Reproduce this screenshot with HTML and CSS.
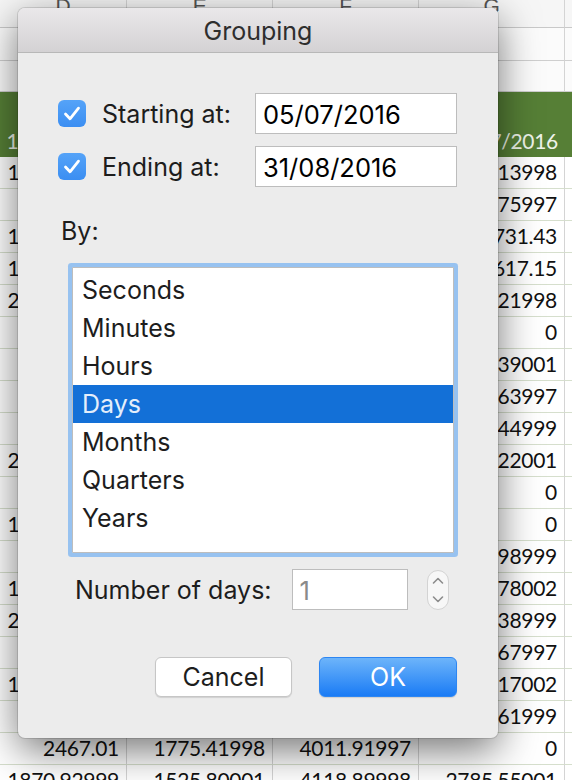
FILE: index.html
```html
<!DOCTYPE html>
<html lang="en">
<head>
    <meta charset="UTF-8">
    <title>Grouping</title>
    <link rel="stylesheet" href="styles.css">
</head>
<body>
    <div class="sheet">
        <div class="row col-heads">
            <div class="cell">D</div><div class="cell">E</div><div class="cell">F</div><div class="cell">G</div><div class="cell"></div>
        </div>
        <div class="row blank tall"><div class="cell"></div><div class="cell"></div><div class="cell"></div><div class="cell"></div><div class="cell"></div></div>
        <div class="row blank"><div class="cell"></div><div class="cell"></div><div class="cell"></div><div class="cell"></div><div class="cell"></div></div>
        <div class="row green"><div class="cell"></div><div class="cell"></div><div class="cell"></div><div class="cell"></div><div class="cell"></div></div>
        <div class="row green">
            <div class="cell">10/07/2016</div><div class="cell">17/07/2016</div><div class="cell">24/07/2016</div><div class="cell">31/07/2016</div><div class="cell"></div>
        </div>
        <div class="row"><div class="cell">1938.47001</div><div class="cell">1620.5</div><div class="cell">3987.22</div><div class="cell">2457.13998</div><div class="cell"></div></div>
        <div class="row"><div class="cell">2287.5</div><div class="cell">1412.88</div><div class="cell">3905.1</div><div class="cell">2145.75997</div><div class="cell"></div></div>
        <div class="row"><div class="cell">1702.32999</div><div class="cell">1588.2</div><div class="cell">4120.4</div><div class="cell">2731.43</div><div class="cell"></div></div>
        <div class="row"><div class="cell">1655.90001</div><div class="cell">1377.6</div><div class="cell">3802.9</div><div class="cell">3617.15</div><div class="cell"></div></div>
        <div class="row"><div class="cell">2104.77998</div><div class="cell">1700.1</div><div class="cell">4055.3</div><div class="cell">1980.21998</div><div class="cell"></div></div>
        <div class="row"><div class="cell">0</div><div class="cell">0</div><div class="cell">0</div><div class="cell">0</div><div class="cell"></div></div>
        <div class="row"><div class="cell">2318.4</div><div class="cell">1499.7</div><div class="cell">3944.6</div><div class="cell">2298.39001</div><div class="cell"></div></div>
        <div class="row"><div class="cell">2411.6</div><div class="cell">1532.2</div><div class="cell">4011.7</div><div class="cell">1862.63997</div><div class="cell"></div></div>
        <div class="row"><div class="cell">2090.1</div><div class="cell">1610.4</div><div class="cell">3877.5</div><div class="cell">2034.44999</div><div class="cell"></div></div>
        <div class="row"><div class="cell">2233.55001</div><div class="cell">1685.9</div><div class="cell">4102.2</div><div class="cell">2511.22001</div><div class="cell"></div></div>
        <div class="row"><div class="cell">0</div><div class="cell">0</div><div class="cell">0</div><div class="cell">0</div><div class="cell"></div></div>
        <div class="row"><div class="cell">1877.30999</div><div class="cell">1455.3</div><div class="cell">3990.8</div><div class="cell">0</div><div class="cell"></div></div>
        <div class="row"><div class="cell">2350.2</div><div class="cell">1598.6</div><div class="cell">4077.1</div><div class="cell">1934.98999</div><div class="cell"></div></div>
        <div class="row"><div class="cell">1921.64002</div><div class="cell">1502.4</div><div class="cell">3866.3</div><div class="cell">2270.78002</div><div class="cell"></div></div>
        <div class="row"><div class="cell">2012.45999</div><div class="cell">1644.8</div><div class="cell">4033.9</div><div class="cell">1976.38999</div><div class="cell"></div></div>
        <div class="row"><div class="cell">2299.7</div><div class="cell">1571.1</div><div class="cell">3921.4</div><div class="cell">2183.67997</div><div class="cell"></div></div>
        <div class="row"><div class="cell">1788.12002</div><div class="cell">1466.5</div><div class="cell">4088.6</div><div class="cell">2609.17002</div><div class="cell"></div></div>
        <div class="row"><div class="cell">2140.3</div><div class="cell">1519.9</div><div class="cell">3955.2</div><div class="cell">1957.61999</div><div class="cell"></div></div>
        <div class="row"><div class="cell">2467.01</div><div class="cell">1775.41998</div><div class="cell">4011.91997</div><div class="cell">0</div><div class="cell"></div></div>
        <div class="row"><div class="cell">1870.92999</div><div class="cell">1525.80001</div><div class="cell">4118.89998</div><div class="cell">2785.55001</div><div class="cell"></div></div>
    </div>

    <div class="dialog">
        <div class="titlebar">Grouping</div>
        <div class="dialog-body">
            <div class="range">
                <span class="checkbox">
                    <svg width="28" height="27" viewBox="0 0 28 27"><path d="M7.5 14 L12 18.8 L20.5 8.2" fill="none" stroke="#fff" stroke-width="2.8" stroke-linecap="round" stroke-linejoin="round"/></svg>
                </span>
                <span class="label">Starting at:</span>
                <div class="field">05/07/2016</div>

                <span class="checkbox">
                    <svg width="28" height="27" viewBox="0 0 28 27"><path d="M7.5 14 L12 18.8 L20.5 8.2" fill="none" stroke="#fff" stroke-width="2.8" stroke-linecap="round" stroke-linejoin="round"/></svg>
                </span>
                <span class="label">Ending at:</span>
                <div class="field">31/08/2016</div>
            </div>

            <div class="by">By:</div>

            <div class="list">
                <div class="item">Seconds</div>
                <div class="item">Minutes</div>
                <div class="item">Hours</div>
                <div class="item selected">Days</div>
                <div class="item">Months</div>
                <div class="item">Quarters</div>
                <div class="item">Years</div>
            </div>

            <div class="count">
                <span class="label">Number of days:</span>
                <div class="field small">1</div>
                <div class="stepper">
                    <svg width="22" height="40" viewBox="0 0 22 40"><path d="M6.5 13 L11 8.5 L15.5 13" fill="none" stroke="#8c8c8c" stroke-width="1.6" stroke-linecap="round" stroke-linejoin="round"/><path d="M6.5 27 L11 31.5 L15.5 27" fill="none" stroke="#8c8c8c" stroke-width="1.6" stroke-linecap="round" stroke-linejoin="round"/></svg>
                </div>
            </div>

            <div class="buttons">
                <button class="btn">Cancel</button>
                <button class="btn primary">OK</button>
            </div>
        </div>
    </div>
</body>
</html>
```

FILE: styles.css
```css
body {
    margin: 0;
    width: 572px;
    height: 780px;
    overflow: hidden;
    background: #fff;
    font-family: Inter, "Noto Sans", sans-serif;
    color: #1d1d1d;
}

/* spreadsheet behind the dialog */
.sheet {
    font-family: Lato, "Liberation Sans", sans-serif;
    font-size: 21px;
    letter-spacing: -0.3px;
    color: #111;
}

.row {
    display: grid;
    grid-template-columns: 127px 146px 146px 146px 146px;
    height: 32px;
}

.cell {
    border-right: 1px solid #d4d4d4;
    border-bottom: 1px solid #d6dfcd;
    text-align: right;
    padding-right: 7px;
    line-height: 30px;
    white-space: nowrap;
    overflow: hidden;
}

.col-heads {
    height: 28px;
    background: #f6f6f6;
}

.col-heads .cell {
    text-align: center;
    padding-right: 0;
    line-height: 12px;
    color: #555;
    border-bottom: 1px solid #c9c9c9;
    font-family: "Liberation Sans", sans-serif;
    font-size: 21px;
    overflow: visible;
}

.blank .cell {
    border-bottom-color: #cfcfcf;
    background: #fbfbfb;
}

.blank.tall {
    height: 33px;
}

.blank {
    height: 31px;
}

.green {
    background: #567f36;
    color: #eef3ea;
    height: 32px;
}

.green .cell {
    border: none;
    line-height: 34px;
}

.green + .green {
    height: 33px;
}

/* dialog */
.dialog {
    position: absolute;
    left: 18px;
    top: 8px;
    width: 480px;
    height: 730px;
    background: #ececec;
    border-radius: 7px;
    box-shadow: 0 12px 40px rgba(0, 0, 0, 0.55), 0 0 0 1px rgba(0, 0, 0, 0.12);
    display: flex;
    flex-direction: column;
}

.titlebar {
    height: 44px;
    line-height: 46px;
    text-align: center;
    font-size: 25px;
    color: #2e2e2e;
    background: linear-gradient(#eae8ea, #d4d2d4);
    border-bottom: 1px solid #b8b8b8;
    border-radius: 7px 7px 0 0;
}

.dialog-body {
    padding: 40px 41px 0 40px;
    font-size: 25px;
}

.range {
    display: grid;
    grid-template-columns: 28px 137px 202px;
    column-gap: 16px;
    row-gap: 12px;
    align-items: center;
}

.checkbox {
    width: 28px;
    height: 27px;
    border-radius: 6px;
    background: linear-gradient(#55a3f8, #3b8ef2);
    display: flex;
}

.field {
    height: 39px;
    background: #fff;
    border: 1px solid #bdbdbd;
    font-size: 25.5px;
    line-height: 41px;
    padding-left: 7px;
    color: #000;
}

.range .label {
    white-space: nowrap;
}

.by {
    margin: 30px 0 0 3px;
    line-height: 28px;
}

.list {
    margin: 22px 0 0 14px;
    width: 382px;
    height: 286px;
    background: #fff;
    border: 1px solid #bdbdbd;
    border-radius: 1px;
    box-shadow: 0 0 0 4px #97c2f0;
    padding-top: 3px;
    box-sizing: border-box;
}

.item {
    height: 38px;
    line-height: 38px;
    padding-left: 9px;
    color: #1d1d1d;
}

.item.selected {
    background: #1370d7;
    color: #e4eefb;
}

.count {
    display: flex;
    align-items: center;
    margin: 16px 0 0 17px;
}

.count .field {
    margin-left: 20px;
}

.field.small {
    width: 107px;
    height: 39px;
    color: #8a8a8a;
}

.stepper {
    margin-left: 19px;
    width: 22px;
    height: 40px;
    border-radius: 11px;
    border: 1px solid #d3d3d3;
    background: #f7f7f7;
    box-sizing: border-box;
    display: flex;
    align-items: center;
    justify-content: center;
}

.stepper svg {
    flex: none;
}

.buttons {
    display: flex;
    justify-content: flex-end;
    gap: 27px;
    margin-top: 47px;
}

.btn {
    width: 137px;
    height: 40px;
    font-family: Inter, "Noto Sans", sans-serif;
    font-size: 25px;
    color: #1d1d1d;
    background: #fff;
    border: 1px solid #c6c6c6;
    border-radius: 6px;
    box-shadow: 0 1px 1px rgba(0, 0, 0, 0.12);
}

.btn.primary {
    width: 138px;
    color: #fff;
    border-color: #2d86f2;
    background: linear-gradient(#6db4fa, #1a7bf5);
}
```
